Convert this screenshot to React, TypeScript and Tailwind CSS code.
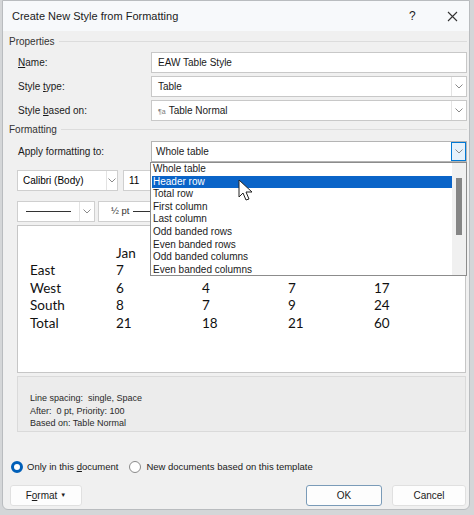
import React from 'react';

const ui = { fontFamily: '"Liberation Sans", Arial, sans-serif' };
const cal = { fontFamily: 'Lato, "Noto Sans", Arial, sans-serif' };

function Chevron({ className = '' }: { className?: string }) {
  return (
    <svg width="8" height="5" viewBox="0 0 8 5" className={className}>
      <path d="M0.5 0.5 L4 4 L7.5 0.5" fill="none" stroke="#8a8a8a" strokeWidth="1" />
    </svg>
  );
}

function Field({ label, children, arrow }: { label: React.ReactNode; children: React.ReactNode; arrow?: boolean }) {
  return (
    <div className="flex items-center">
      <div className="w-[143px] pl-[10px] text-[10px] text-[#1a1a1a]">{label}</div>
      <div className="flex h-[21px] flex-1 items-center border border-[#c8c8c8] bg-white pl-[6px] text-[10px] text-[#1a1a1a]">
        <div className="flex-1">{children}</div>
        {arrow && (
          <div className="flex h-full w-[15px] items-center justify-center border-l border-[#e3e3e3]">
            <Chevron />
          </div>
        )}
      </div>
    </div>
  );
}

function Section({ title }: { title: string }) {
  return (
    <div className="flex items-center gap-[4px] pl-[1px] text-[10px] text-[#333]">
      <span>{title}</span>
      <div className="h-px flex-1 bg-[#dcdcdc]" />
    </div>
  );
}

const items = [
  'Whole table',
  'Header row',
  'Total row',
  'First column',
  'Last column',
  'Odd banded rows',
  'Even banded rows',
  'Odd banded columns',
  'Even banded columns',
];

// cells hidden under the open list are left empty
const rows = [
  ['', 'Jan', '', '', ''],
  ['East', '7', '', '', ''],
  ['West', '6', '4', '7', '17'],
  ['South', '8', '7', '9', '24'],
  ['Total', '21', '18', '21', '60'],
];

export default function App() {
  return (
    <div className="h-[515px] w-[474px] overflow-hidden bg-[#d4d6d8]" style={ui}>
      <div className="relative ml-[2px] h-[510px] w-[468px] overflow-hidden rounded-b-[6px] border border-[#b9bcbf] bg-[#f0f0f0]">
        {/* title bar */}
        <div className="flex h-[30px] items-center bg-[#f7f9fb] pl-[9px] text-[11px] text-[#1b1b1b]">
          <span className="flex-1">Create New Style from Formatting</span>
          <span className="w-[38px] text-[12px]">?</span>
          <svg width="11" height="11" viewBox="0 0 11 11" className="mr-[11px]">
            <path d="M1 1 L10 10 M10 1 L1 10" stroke="#333" strokeWidth="1.1" />
          </svg>
        </div>

        <div className="flex flex-col pl-[5px] pr-[2px]">
          <div className="mt-[3px]">
            <Section title="Properties" />
          </div>
          <div className="mt-[3px] flex flex-col gap-[3px]">
            <Field label={<><u>N</u>ame:</>}>EAW Table Style</Field>
            <Field label={<>Style <u>t</u>ype:</>} arrow>Table</Field>
            <Field label={<>Style <u>b</u>ased on:</>} arrow>
              <span className="mr-[3px] text-[7px] text-[#777]">¶a</span>Table Normal
            </Field>
          </div>
          <div className="mt-[1px]">
            <Section title="Formatting" />
          </div>
          <div className="mt-[4px] flex items-center">
            <div className="w-[143px] pl-[10px] text-[10px] text-[#1a1a1a]">Apply formatting to:</div>
            <div className="flex h-[21px] flex-1 items-center border border-[#b4b4b4] bg-white pl-[4px] text-[10px] text-[#1a1a1a]">
              <div className="flex-1">Whole table</div>
              <div className="flex h-full w-[15px] items-center justify-center border border-[#0078d4] bg-[#e5f1fb]">
                <Chevron />
              </div>
            </div>
          </div>

          {/* font toolbar */}
          <div className="ml-[9px] mt-[8px] flex items-center gap-[5px] text-[10px]">
            <div className="flex h-[21px] w-[101px] items-center border border-[#cfcfcf] bg-white pl-[5px]">
              <span className="flex-1">Calibri (Body)</span>
              <div className="flex h-full w-[11px] items-center justify-center border-l border-[#e3e3e3]">
                <Chevron />
              </div>
            </div>
            <div className="flex h-[21px] w-[45px] items-center border border-[#cfcfcf] bg-white pl-[5px]">11</div>
            <div className="h-[21px] w-[60px] border border-[#cfcfcf] bg-white" />
          </div>

          {/* border toolbar */}
          <div className="ml-[9px] mt-[10px] flex items-center gap-[3px] text-[9.5px]">
            <div className="flex h-[21px] w-[78px] items-center border border-[#cfcfcf] bg-white">
              <div className="mx-[8px] h-px flex-1 bg-[#333]" />
              <div className="flex h-full w-[15px] items-center justify-center border-l border-[#e3e3e3]">
                <Chevron />
              </div>
            </div>
            <div className="flex h-[21px] w-[100px] items-center border border-[#cfcfcf] bg-white pl-[12px] text-[#333]">
              <span>½ pt</span>
              <div className="ml-[3px] h-px w-[40px] bg-[#333]" />
            </div>
          </div>

          {/* preview */}
          <div className="ml-[9px] mt-[3px] h-[148px] w-[449px] border border-[#c6c6c6] bg-white pl-[12px] pt-[18px] text-[13.5px] text-[#111]" style={cal}>
            {rows.map((r, i) => (
              <div key={i} className="flex h-[17.5px] items-center">
                {r.map((c, j) => (
                  <span key={j} className="w-[86px]">
                    {c}
                  </span>
                ))}
              </div>
            ))}
          </div>

          {/* description */}
          <div className="ml-[9px] mt-[3px] h-[56px] w-[449px] border border-[#dadada] bg-[#ececec] pl-[12px] pt-[15px] text-[9px] leading-[12.5px] text-[#2a2a2a]">
            <div>Line spacing:&nbsp; single, Space</div>
            <div>After:&nbsp; 0 pt, Priority: 100</div>
            <div>Based on: Table Normal</div>
          </div>

          {/* radios */}
          <div className="ml-[3px] mt-[28px] flex items-center text-[9.5px] text-[#1a1a1a]">
            <div className="h-[12px] w-[12px] rounded-full border-[3.5px] border-[#005fb8] bg-white" />
            <span className="ml-[4px]">
              Only in this <u>d</u>ocument
            </span>
            <div className="ml-[11px] h-[12px] w-[12px] rounded-full border border-[#8a8a8a] bg-white" />
            <span className="ml-[5px]">New documents based on this template</span>
          </div>

          {/* buttons */}
          <div className="mr-[1px] mt-[11px] flex items-center text-[10px] text-[#1a1a1a]">
            <div className="ml-[2px] flex h-[21px] w-[72px] items-center justify-center gap-[3px] rounded-[3px] border border-[#e0e0e0] bg-[#fdfdfd]">
              <span>
                F<u>o</u>rmat
              </span>
              <span className="text-[6px]">▼</span>
            </div>
            <div className="flex-1" />
            <div className="flex h-[21px] w-[76px] items-center justify-center rounded-[3px] border border-[#7a9bb8] bg-[#fdfdfd]">OK</div>
            <div className="ml-[10px] flex h-[21px] w-[74px] items-center justify-center rounded-[3px] border border-[#e0e0e0] bg-[#fdfdfd]">
              Cancel
            </div>
          </div>
        </div>

        {/* dropdown list */}
        <div className="absolute left-[147px] top-[161px] flex h-[114px] w-[317px] border border-[#8c8c8c] bg-white text-[10px] text-[#1a1a1a]">
          <div className="flex-1 pl-[1px]">
            {items.map((it, i) => (
              <div
                key={it}
                className={`h-[12.6px] pl-[1px] leading-[12.6px] ${i === 1 ? 'bg-[#0a64c8] text-white' : ''}`}
              >
                {it}
              </div>
            ))}
          </div>
          <div className="flex w-[14px] justify-center bg-[#f0f0f0] pt-[15px]">
            <div className="h-[57px] w-[6px] bg-[#858585]" />
          </div>
        </div>

        {/* cursor */}
        <svg className="absolute left-[235px] top-[178px]" width="16" height="24" viewBox="0 0 16 24">
          <path d="M1 1 L1 18 L5 14 L8 21 L11 20 L8 13 L14 13 Z" fill="white" stroke="#222" strokeWidth="1" />
        </svg>
      </div>
    </div>
  );
}
